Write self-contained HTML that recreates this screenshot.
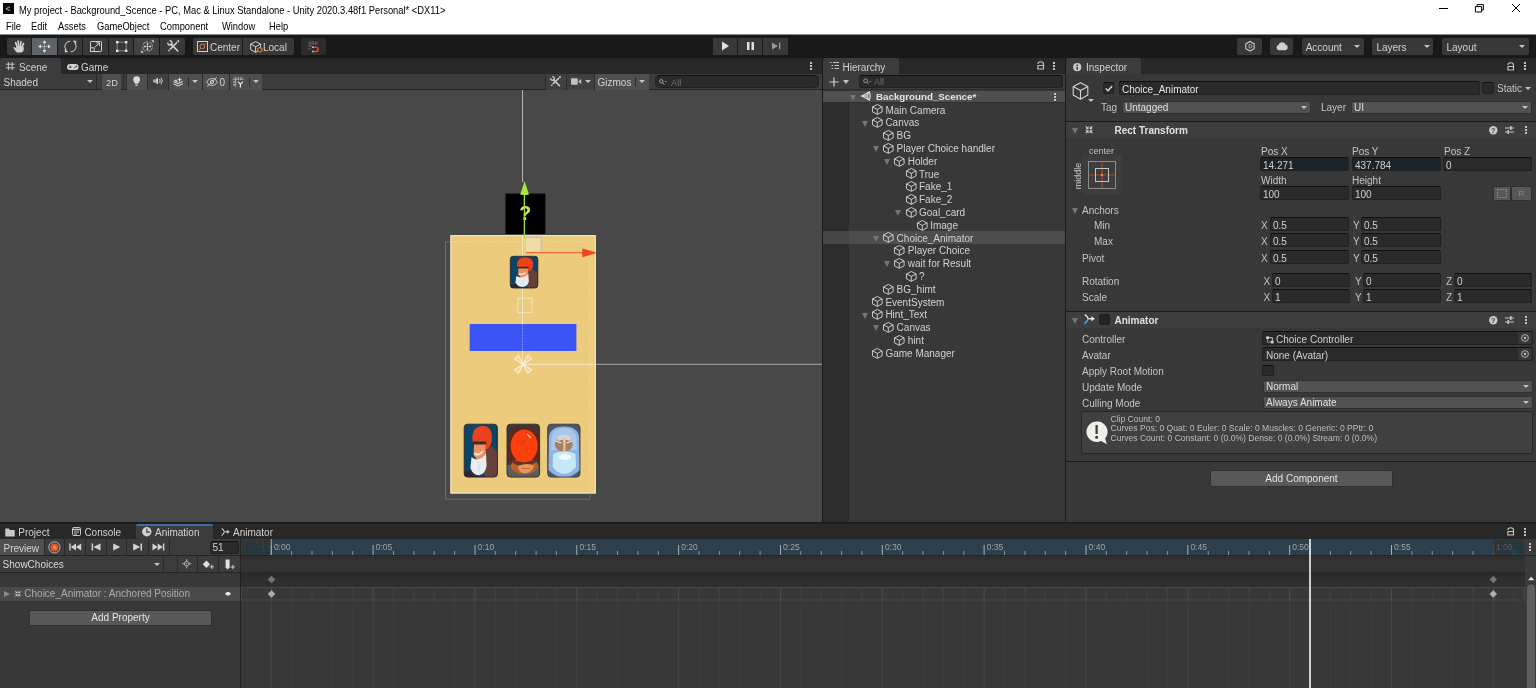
<!DOCTYPE html><html><head><meta charset="utf-8"><title>Unity</title><style>
*{box-sizing:border-box;margin:0;padding:0}
html,body{width:1536px;height:688px;overflow:hidden;background:#191919}
body{font-family:"Liberation Sans",sans-serif;font-size:10px;color:#c8c8c8;position:relative;line-height:1}
.a{position:absolute}
.t{position:absolute;white-space:nowrap;line-height:12px;height:12px}
.b{font-weight:bold}
.fld{position:absolute;height:14px;background:#2a2a2a;border:1px solid #212121;border-top-color:#0f0f0f;border-radius:2px;color:#d0d0d0;padding-left:2px;padding-top:2px;line-height:12px;white-space:nowrap}
.fldb{background:#1b242b}
.dd{position:absolute;height:13px;background:#515151;border:1px solid #303030;border-radius:2px;color:#e0e0e0;padding-left:2px;line-height:12px;white-space:nowrap}
.btn{position:absolute;background:#585858;border:1px solid #303030;border-radius:2px;color:#e4e4e4;text-align:center;white-space:nowrap}
.tb{position:absolute;background:#383838;top:38px;height:17px}
.stb{position:absolute;background:#4f4f4f;top:74px;height:15.5px}
.arr{position:absolute;width:0;height:0;border-left:3.5px solid transparent;border-right:3.5px solid transparent;border-top:4px solid #c4c4c4}
.fold{position:absolute;width:0;height:0;border-left:3.5px solid transparent;border-right:3.5px solid transparent;border-top:6px solid #757575}
.foldr{position:absolute;width:0;height:0;border-top:3.5px solid transparent;border-bottom:3.5px solid transparent;border-left:6px solid #757575}
svg{position:absolute;overflow:visible}
.lbl{color:#c4c4c4}
</style></head><body><div id="root" style="position:absolute;left:0;top:0;width:1536px;height:688px;overflow:hidden;will-change:transform;transform:translateZ(0)">
<div class="a" style="left:0;top:0;width:1536px;height:34px;background:#fff"></div><div class="a" style="left:0;top:34px;width:1536px;height:1px;background:#8a8a8a"></div>
<div class="a" style="left:2.5px;top:3px;width:11px;height:11px;background:#0a0a0a"></div>
<svg style="left:4.7px;top:6.4px" width="6" height="5.4" viewBox="0 0 7 7"><path d="M0.3 3.5 L3 1.2 L3 5.8 Z M3.8 0.6 L6.6 1.6 L4.2 3.2Z M3.8 6.4 L6.6 5.4 L4.2 3.8Z" fill="#b4b4b4"/></svg>
<div class="t" style="left:18.6px;top:4.5px;font-size:10.25px;transform:scaleX(0.912);transform-origin:0 0;color:#000">My project - Background_Scence - PC, Mac &amp; Linux Standalone - Unity 2020.3.48f1 Personal* &lt;DX11&gt;</div>
<div class="t" style="left:5.5px;top:21px;font-size:10.3px;transform:scaleX(0.905);transform-origin:0 0;color:#000">File</div>
<div class="t" style="left:31.3px;top:21px;font-size:10.3px;transform:scaleX(0.905);transform-origin:0 0;color:#000">Edit</div>
<div class="t" style="left:58.3px;top:21px;font-size:10.3px;transform:scaleX(0.905);transform-origin:0 0;color:#000">Assets</div>
<div class="t" style="left:96.5px;top:21px;font-size:10.3px;transform:scaleX(0.905);transform-origin:0 0;color:#000">GameObject</div>
<div class="t" style="left:160.3px;top:21px;font-size:10.3px;transform:scaleX(0.905);transform-origin:0 0;color:#000">Component</div>
<div class="t" style="left:222.3px;top:21px;font-size:10.3px;transform:scaleX(0.905);transform-origin:0 0;color:#000">Window</div>
<div class="t" style="left:269.3px;top:21px;font-size:10.3px;transform:scaleX(0.905);transform-origin:0 0;color:#000">Help</div>
<svg style="left:1438px;top:2px" width="90" height="14" viewBox="0 0 90 14"><path d="M1 6.5h9" stroke="#000" stroke-width="1" fill="none"/><path d="M37.4 4.6h6.2v5.4h-6.2z M39.2 4.6v-2h6.2v5.4h-1.8" stroke="#000" stroke-width="1" fill="none"/><path d="M74 2l8 8M82 2l-8 8" stroke="#000" stroke-width="1" fill="none"/></svg>
<div class="a" style="left:0;top:35px;width:1536px;height:23px;background:#191919"></div>
<div class="tb" style="left:7px;width:24px;background:#383838;border-radius:2px 0 0 2px;"></div>
<div class="tb" style="left:32px;width:25px;background:#5e6367;"></div>
<div class="tb" style="left:58px;width:24px;background:#383838;"></div>
<div class="tb" style="left:83px;width:25px;background:#383838;"></div>
<div class="tb" style="left:109px;width:24px;background:#383838;"></div>
<div class="tb" style="left:134px;width:25px;background:#424242;"></div>
<div class="tb" style="left:160px;width:25px;background:#383838;border-radius:0 2px 2px 0;"></div>
<div class="tb" style="left:193px;width:49px;border-radius:2px 0 0 2px"></div><div class="tb" style="left:243px;width:51px;border-radius:0 2px 2px 0"></div>
<div class="t" style="left:210px;top:42px;color:#d2d2d2">Center</div><div class="t" style="left:263px;top:42px;color:#d2d2d2">Local</div>
<div class="tb" style="left:301px;width:25px;border-radius:2px;background:#2c2c2c"></div>
<svg style="left:13.4px;top:39.8px" width="12" height="12.6" viewBox="0 0 12 12.6"><g fill="#d2d2d2"><rect x="-0.8" y="-3" width="1.7" height="6.4" rx="0.85" transform="translate(3.3,4.6) rotate(-20)"/><rect x="-0.85" y="-3.4" width="1.7" height="7" rx="0.85" transform="translate(5.4,3.7) rotate(-6)"/><rect x="-0.85" y="-3.3" width="1.7" height="6.8" rx="0.85" transform="translate(7.6,4) rotate(8)"/><rect x="-0.8" y="-2.8" width="1.6" height="6" rx="0.8" transform="translate(9.8,5.2) rotate(24)"/><path d="M0.4 7.4c0.5-0.7 1.3-0.5 1.8 0.1l1.1 1.3V6.6h7.2l0.3 1.6c0.2 2-0.8 4.2-2.4 4.2H4.8c-1 0-1.7-0.5-2.4-1.5z"/></g></svg>
<svg style="left:38.3px;top:39.8px" width="13" height="13" viewBox="-6.5 -6.5 13 13"><g stroke="#a8a8a8" stroke-width="0.9" fill="none"><path d="M0 -4V4M-4 0H4"/></g><g fill="#e4e4e4"><path d="M0 -6.3L-1.9 -3.5H1.9zM0 6.3L-1.9 3.5H1.9zM-6.3 0L-3.5 -1.9V1.9zM6.3 0L3.5 -1.9V1.9z"/></g></svg>
<svg style="left:63.8px;top:39.8px" width="13" height="13" viewBox="-6.5 -6.5 13 13"><g stroke="#d2d2d2" stroke-width="1" fill="none"><path d="M-0.2 -5.3A5.3 5.3 0 0 0 -4.4 3.4"/><path d="M0.2 5.3A5.3 5.3 0 0 0 4.4 -3.4"/></g><path d="M-5.7 2.2V5.7H-2.2zM5.7 -2.2V-5.7H2.2z" fill="#d2d2d2"/></svg>
<svg style="left:90px;top:41px" width="12" height="11" viewBox="0 0 12 11"><rect x="0.5" y="0.5" width="11" height="10" rx="0.8" fill="none" stroke="#d2d2d2" stroke-width="1"/><rect x="0.5" y="6.8" width="3.7" height="3.7" fill="none" stroke="#d2d2d2" stroke-width="1"/><path d="M5 6L9.3 1.9M6.2 1.9H9.4V5" stroke="#d2d2d2" stroke-width="1" fill="none"/></svg>
<svg style="left:115.8px;top:41px" width="11.4" height="11" viewBox="0 0 11.4 11"><path d="M1.2 1.2H10.2V9.8H1.2z" fill="none" stroke="#909090" stroke-width="0.9"/><g fill="#e6e6e6"><rect x="0" y="0" width="2.4" height="2.4"/><rect x="9" y="0" width="2.4" height="2.4"/><rect x="0" y="8.6" width="2.4" height="2.4"/><rect x="9" y="8.6" width="2.4" height="2.4"/></g></svg>
<svg style="left:140.8px;top:40px" width="13" height="13" viewBox="-6.5 -6.5 13 13"><g stroke="#bdbdbd" stroke-width="0.9" fill="none"><circle r="5" stroke="#9c9c9c" stroke-dasharray="6 1.85" transform="rotate(14)"/><path d="M0 -3.4V3.4M-3.4 0H3.4"/></g><g fill="#d8d8d8"><path d="M0 -4.2L-1.3 -2.2H1.3zM0 4.2L-1.3 2.2H1.3zM-4.2 0L-2.2 -1.3V1.3zM4.2 0L2.2 -1.3V1.3z"/><path d="M6.3 -6.3H3.6L6.3 -3.6zM-6.3 6.3H-3.6L-6.3 3.6z"/></g></svg>
<svg style="left:166.8px;top:40px" width="12.4" height="12.4" viewBox="0 0 12.4 12.4"><g stroke="#d2d2d2" fill="none"><path d="M4 4.2L10.8 11" stroke-width="1.7" stroke-linecap="round"/><path d="M10.2 2.2L3 9.4" stroke-width="1.6"/></g><path d="M2.54 0.83A2.1 2.1 0 1 1 0.83 2.54" fill="none" stroke="#d2d2d2" stroke-width="1.4"/><path d="M1 11.6L1.7 9.3L3.2 10.8z" fill="#d2d2d2"/><path d="M10 1l1.4 1.4l0.7-0.7a1 1 0 0 0 -1.4-1.4z" fill="#d2d2d2"/></svg>
<svg style="left:197px;top:41px" width="11" height="11" viewBox="0 0 11 11"><rect x="0.5" y="0.5" width="10" height="10" fill="none" stroke="#d0d0d0" stroke-width="1"/><path d="M2 9L9 2" stroke="#9a9a9a" stroke-width="0.7"/><circle cx="5.4" cy="5.4" r="2.4" fill="#383838" stroke="#e8722c" stroke-width="1"/></svg>
<svg style="left:249.6px;top:40.6px" width="13" height="12" viewBox="0 0 13 12"><path d="M5.6 0.6L10.6 3.1V8.6L5.6 11.3L0.6 8.6V3.1Z M0.6 3.1L5.6 5.8L10.6 3.1M5.6 5.8V11.3" fill="none" stroke="#d0d0d0" stroke-width="1" stroke-linejoin="round"/><circle cx="9.8" cy="8.8" r="2.2" fill="#383838" stroke="#e8722c" stroke-width="1.2"/></svg>
<svg style="left:308.4px;top:41.2px" width="11.2" height="11.2" viewBox="0 0 11.2 11.2"><path d="M2.2 0V7M5 0V4M7.8 0V4M0 2.2H10M0 5H4M0 7.8H3" stroke="#7a7a7a" stroke-width="0.9" stroke-dasharray="1.6 0.7" fill="none"/><path d="M4.6 6.2H8a2.2 2.2 0 0 1 0 4.4H4.6" fill="none" stroke="#d8482c" stroke-width="1.5"/><path d="M4.2 6.2h1.4M4.2 10.6h1.4" stroke="#d8d8d8" stroke-width="1.5"/></svg>
<div class="tb" style="left:713px;width:24px"></div>
<div class="tb" style="left:738px;width:24px"></div>
<div class="tb" style="left:763px;width:25px"></div>
<svg style="left:713px;top:38px" width="75" height="16" viewBox="0 0 75 16"><path d="M9 3.5l7 4.5l-7 4.5z" fill="#e0e0e0"/><path d="M34 4h2.5v8H34zM38.5 4H41v8h-2.5z" fill="#e0e0e0"/><path d="M59 4.5l6 3.5l-6 3.5z M66 4.5h1.3v7H66z" fill="#9a9a9a"/></svg>
<div class="tb" style="left:1237px;width:25px;border-radius:2px"></div>
<div class="tb" style="left:1270px;width:23px;border-radius:2px"></div>
<div class="tb" style="left:1302px;width:62px;border-radius:2px"></div>
<div class="tb" style="left:1372px;width:61px;border-radius:2px"></div>
<div class="tb" style="left:1442px;width:87px;border-radius:2px"></div>
<div class="t" style="left:1305.7px;top:42px;color:#d2d2d2">Account</div><div class="arr" style="left:1353.7px;top:45px;border-left-width:3.2px;border-right-width:3.2px;border-top-width:3.8px"></div>
<div class="t" style="left:1376.4px;top:42px;color:#d2d2d2">Layers</div><div class="arr" style="left:1424px;top:45px;border-left-width:3.2px;border-right-width:3.2px;border-top-width:3.8px"></div>
<div class="t" style="left:1446.5px;top:42px;color:#d2d2d2">Layout</div><div class="arr" style="left:1518.6px;top:45px;border-left-width:3.2px;border-right-width:3.2px;border-top-width:3.8px"></div>
<svg style="left:1244.5px;top:41.3px" width="10" height="10.6" viewBox="-5 -5.3 10 10.6"><path d="M0 -4.8L4.2 -2.4V2.4L0 4.8L-4.2 2.4V-2.4Z" fill="none" stroke="#c8c8c8" stroke-width="1.1"/><path d="M-0.9 -1.7h1.2a1.7 1.7 0 0 1 0 3.4h-1.2z" fill="none" stroke="#c8c8c8" stroke-width="0.8"/></svg>
<svg style="left:1275.6px;top:42.2px" width="12.4" height="8.4" viewBox="0 0 12.4 8.4"><path d="M3 8.2a2.7 2.7 0 0 1 -0.5 -5.3a3.6 3.6 0 0 1 6.9 -0.3a2.9 2.9 0 0 1 0.4 5.6z" fill="#d0d0d0"/></svg>
<div class="a" style="left:0;top:58px;width:822px;height:16px;background:#282828"></div>
<div class="a" style="left:0;top:58px;width:61px;height:16px;background:#3c3c3c;border-radius:3px 3px 0 0"></div>
<div class="t" style="left:19px;top:62px;color:#d2d2d2">Scene</div><div class="t" style="left:81px;top:62px;color:#d2d2d2">Game</div>
<div class="a" style="left:0;top:74px;width:822px;height:16px;background:#3c3c3c;border-bottom:1px solid #232323"></div>
<div class="t" style="left:3.5px;top:77px;color:#d2d2d2">Shaded</div><div class="arr" style="left:86.5px;top:80px;border-left-width:3px;border-right-width:3px;border-top-width:3.5px"></div>
<div class="a" style="left:96px;top:74px;width:1px;height:15px;background:#2c2c2c"></div>
<div class="a" style="left:123px;top:74px;width:1px;height:15px;background:#2c2c2c"></div>
<div class="a" style="left:126px;top:74px;width:1px;height:15px;background:#2c2c2c"></div>
<div class="a" style="left:147px;top:74px;width:1px;height:15px;background:#2c2c2c"></div>
<div class="a" style="left:168px;top:74px;width:1px;height:15px;background:#2c2c2c"></div>
<div class="a" style="left:201.5px;top:74px;width:1px;height:15px;background:#2c2c2c"></div>
<div class="a" style="left:229px;top:74px;width:1px;height:15px;background:#2c2c2c"></div>
<div class="a" style="left:545px;top:74px;width:1px;height:15px;background:#2c2c2c"></div>
<div class="a" style="left:566px;top:74px;width:1px;height:15px;background:#2c2c2c"></div>
<div class="a" style="left:594px;top:74px;width:1px;height:15px;background:#2c2c2c"></div>
<div class="stb" style="left:102px;width:19px;background:#4f4f4f"></div>
<div class="stb" style="left:127px;width:20px;background:#4f4f4f"></div>
<div class="stb" style="left:148px;width:20px;background:#404040"></div>
<div class="stb" style="left:169px;width:32.5px;background:#4f4f4f"></div>
<div class="stb" style="left:202.5px;width:26.5px;background:#4f4f4f"></div>
<div class="stb" style="left:230px;width:32px;background:#4f4f4f"></div>
<div class="stb" style="left:546px;width:20px;background:#404040"></div>
<div class="stb" style="left:567px;width:27px;background:#404040"></div>
<div class="stb" style="left:595px;width:54px;background:#4f4f4f"></div>
<div class="t" style="left:106px;top:77px;font-size:9.3px;color:#d2d2d2">2D</div>
<div class="arr" style="left:192px;top:80.2px;border-left-width:3px;border-right-width:3px;border-top-width:3.5px"></div><div class="a" style="left:188px;top:77px;width:1px;height:9px;background:#2e2e2e"></div>
<div class="t" style="left:219.6px;top:77px;color:#d2d2d2">0</div>
<div class="arr" style="left:253px;top:80.2px;border-left-width:3px;border-right-width:3px;border-top-width:3.5px"></div><div class="a" style="left:249px;top:77px;width:1px;height:9px;background:#2e2e2e"></div>
<div class="arr" style="left:585px;top:80.2px;border-left-width:3px;border-right-width:3px;border-top-width:3.5px"></div>
<div class="t" style="left:597.5px;top:77px;color:#d2d2d2">Gizmos</div><div class="a" style="left:635px;top:77px;width:1px;height:9px;background:#2e2e2e"></div><div class="arr" style="left:639px;top:80.2px;border-left-width:3px;border-right-width:3px;border-top-width:3.5px"></div>
<div class="fld" style="left:655px;top:75px;width:164px;height:13px;border-radius:5px;padding:0"></div><div class="t" style="left:671px;top:76.5px;color:#6e6e6e;font-size:9.3px">All</div>
<div class="a" style="left:810px;top:62px;width:2px;height:8px;background:repeating-linear-gradient(#c4c4c4 0 2px,transparent 2px 3px)"></div>
<svg style="left:5.6px;top:62.4px" width="8.6" height="8" viewBox="0 0 8.6 8"><path d="M2.4 0V8M6.2 0V8M0 2.2H8.6M0 5.8H8.6" stroke="#d2d2d2" stroke-width="0.9" fill="none"/></svg>
<svg style="left:67px;top:64px" width="11.6" height="6" viewBox="0 0 11.6 6"><rect x="0" y="0" width="11.6" height="6" rx="3" fill="#d2d2d2"/><path d="M2 3h2.4M3.2 1.8v2.4" stroke="#282828" stroke-width="0.8"/><circle cx="8" cy="3.6" r="0.7" fill="#282828"/><circle cx="9.4" cy="2.3" r="0.7" fill="#282828"/></svg>
<svg style="left:133px;top:76.2px" width="7.2" height="10" viewBox="0 0 7.2 10"><path d="M3.6 0.2a3.4 3.4 0 0 1 3.4 3.4c0 1.5-0.9 2.2-1.4 3.4H1.6C1.1 5.8 0.2 5.1 0.2 3.6A3.4 3.4 0 0 1 3.6 0.2z" fill="#dadada"/><path d="M2 7.8h3.2M2.5 9.3h2.2" stroke="#dadada" stroke-width="1"/></svg>
<svg style="left:152.6px;top:77px" width="10.6" height="8" viewBox="0 0 10.6 8"><path d="M0.3 2.6h1.5v2.8H0.3z M2.4 2.4L5 0.4V7.6L2.4 5.6z" fill="#d2d2d2"/><path d="M6.4 2a3 3 0 0 1 0 4M7.9 0.8a4.8 4.8 0 0 1 0 6.4" stroke="#d2d2d2" stroke-width="1" fill="none"/></svg>
<svg style="left:172.6px;top:76.6px" width="10.2" height="9.6" viewBox="0 0 10.2 9.6"><path d="M0.4 4.6L5 6.6L9.8 4.6M0.4 6.8L5 8.9L9.8 6.8" stroke="#d2d2d2" stroke-width="1.1" fill="none"/><path d="M0.8 3.6L3 2.4L5 4.4L3.6 5z" fill="#d2d2d2"/><path d="M6.6 0l0.7 1.9l1.9 0.7l-1.9 0.7L6.6 5.2L5.9 3.3L4 2.6l1.9-0.7z" fill="#e4e4e4"/></svg>
<svg style="left:206px;top:76.6px" width="12" height="10" viewBox="0 0 12 10"><path d="M0.5 5C2 2.6 4 1.6 6 1.6S10 2.6 11.5 5C10 7.4 8 8.4 6 8.4S2 7.4 0.5 5z" fill="none" stroke="#d2d2d2" stroke-width="0.9"/><circle cx="6" cy="5" r="1.7" fill="none" stroke="#d2d2d2" stroke-width="0.9"/><path d="M1.2 9.4L10.6 0.4" stroke="#d2d2d2" stroke-width="1"/></svg>
<svg style="left:232.8px;top:76.6px" width="11.2" height="10.4" viewBox="0 0 11.2 10.4"><path d="M2.3 0V10M5.2 0V3M8.1 0V3M0 2.2H10.6M0 5H3.4M0 7.8H3.4" stroke="#d2d2d2" stroke-width="0.9" fill="none" stroke-dasharray="1.7 0.6"/><path d="M5 4.6L7.4 7.2L9.9 4.6M7.4 7.2V10.4" stroke="#e8e8e8" stroke-width="1.2" fill="none"/></svg>
<svg style="left:550.2px;top:76px" width="11" height="11" viewBox="0 0 12.4 12.4"><g stroke="#d2d2d2" fill="none"><path d="M4 4.2L10.8 11" stroke-width="1.7" stroke-linecap="round"/><path d="M10.2 2.2L3 9.4" stroke-width="1.6"/></g><path d="M2.54 0.83A2.1 2.1 0 1 1 0.83 2.54" fill="none" stroke="#d2d2d2" stroke-width="1.4"/><path d="M1 11.6L1.7 9.3L3.2 10.8z" fill="#d2d2d2"/><path d="M10 1l1.4 1.4l0.7-0.7a1 1 0 0 0 -1.4-1.4z" fill="#d2d2d2"/></svg>
<svg style="left:571px;top:78.2px" width="10.2" height="7" viewBox="0 0 10.2 7"><rect x="0" y="0.2" width="6.8" height="6.6" rx="0.8" fill="#c0c0c0"/><path d="M7.2 3.5L10.2 0.8V6.2z" fill="#c0c0c0"/></svg>
<svg style="left:659px;top:79.2px" width="8" height="6" viewBox="0 0 8 6"><circle cx="2.3" cy="2.3" r="1.7" fill="none" stroke="#b0b0b0" stroke-width="0.9"/><path d="M3.5 3.6L5.4 5.6" stroke="#b0b0b0" stroke-width="1"/><path d="M5.6 2h2.2L6.7 3.3z" fill="#b0b0b0"/></svg>
<div class="a" style="left:0;top:90px;width:822px;height:432px;background:#484848"></div>
<svg style="left:0;top:90px" width="822" height="432" viewBox="0 90 822 432"><defs><filter id="bl" x="-20%" y="-20%" width="140%" height="140%"><feGaussianBlur stdDeviation="0.55"/></filter><filter id="bl2" x="-20%" y="-20%" width="140%" height="140%"><feGaussianBlur stdDeviation="1.4"/></filter><clipPath id="c0"><rect x="510.3" y="256.3" width="27.5" height="31.7" rx="3"/></clipPath><clipPath id="c1"><rect x="464.2" y="424.2" width="33.2" height="52.9" rx="3.5"/></clipPath><clipPath id="c2"><rect x="507" y="424.2" width="32.6" height="52.9" rx="3.5"/></clipPath><clipPath id="c3"><rect x="547.7" y="424.2" width="32.3" height="52.9" rx="3.5"/></clipPath></defs><path d="M522.5 90V182" stroke="#b4b4b4" stroke-width="1"/><rect x="505.5" y="193.6" width="39.9" height="40.4" fill="#000"/><text x="525.3" y="219.6" font-size="19.5" font-weight="bold" text-anchor="middle" fill="#e2dc50" font-family="Liberation Sans,sans-serif">?</text><rect x="450.4" y="235.2" width="145.4" height="258.3" fill="#eccb7c"/><rect x="450.9" y="235.7" width="144.4" height="257.3" fill="none" stroke="#f7ead0" stroke-width="1"/><path d="M450 241.8H445.5V499.2H590.2V493.5" fill="none" stroke="#6e6e6e" stroke-width="1"/><path d="M451 241.8H590M590 241.8V493" fill="none" stroke="#f8f0d8" stroke-width="1" stroke-dasharray="1 1.2" opacity="0.55"/><path d="M522.5 236V324" stroke="#f4e6c0" stroke-width="1"/><path d="M522.5 324V364" stroke="#ffffff" stroke-width="1" stroke-dasharray="1 1.2" opacity="0.9"/><path d="M524.4 194V238" stroke="#a0e040" stroke-width="1.3"/><path d="M524.6 181L520.2 194.4Q524.6 195.8 529 194.4Z" fill="#a6e63e"/><rect x="526" y="237.3" width="15" height="14.2" fill="#f2d9a8"/><path d="M526 237.3H541.2V251.5" fill="none" stroke="#a9c4e4" stroke-width="1.2"/><path d="M526 252.6H584" stroke="#f06a3a" stroke-width="1.2"/><path d="M597 252.8L582.6 248.4Q581.4 252.8 582.6 257.3Z" fill="#e84a1c"/><g clip-path="url(#c0)"><g transform="translate(510.3,256.3) scale(0.828,0.6) translate(-464.2,-424.2)"><rect x="464" y="424" width="34" height="54" fill="#0a4568"/><g filter="url(#bl)"><path d="M486 444 L491 446 L498 452 L498 478 L484 478 L486 460Z" fill="#68403a"/><path d="M472.6 441 C471 430 477 425.5 483 426 C490 426 493 432 491.6 441 C491 446 488 449.5 485.5 449 L484 443 L473 443Z" fill="#e9421a"/><path d="M472.4 441.5 H486 L486.4 444.5 H473Z" fill="#4a2a22"/><path d="M474 444.5 H485.5 L486 456 L478 461 L473.6 455Z" fill="#f0905e"/><path d="M474.5 452.5 Q478.5 455 482.5 450.5 L482.8 452.8 Q478.5 457 474.5 454.5Z" fill="#f8f0e8"/><path d="M471.5 457 Q474 459 477 459.5 Q482 459 486 454 L486.6 466 Q485 474.5 479 475.2 Q472.5 475 470.4 468Z" fill="#ececf0"/><path d="M478 462 L481 463 L480 473 L477.5 473Z" fill="#cfe6f4"/><path d="M464 472 L471 470 L474 476 L486 476.5 L486 478 L464 478Z" fill="#33262a"/></g></g></g><rect x="510.3" y="256.3" width="27.5" height="31.7" rx="3" fill="none" stroke="#1c1c28" stroke-width="0.8"/><rect x="518" y="298.1" width="14" height="14.6" fill="none" stroke="#f6e8c4" stroke-width="0.9"/><rect x="469.7" y="324" width="106.7" height="27" fill="#3a54f6"/><path d="M522.5 324V351" stroke="#9fb0ff" stroke-width="1" stroke-dasharray="1 1.2"/><path d="M524 364.3H596" stroke="#f7ecd0" stroke-width="1"/><path d="M596 364.3H822" stroke="#a6a6a6" stroke-width="1"/><g transform="translate(523.1,364.3)" fill="#f0d69a" stroke="#ffffff" stroke-width="0.8" stroke-linejoin="round"><path d="M0 0L-8.6 -5.4L-4.6 -9.2Z"/><path d="M0 0L8.6 -5.4L4.6 -9.2Z"/><path d="M0 0L-8.6 5.4L-4.6 9.2Z"/><path d="M0 0L8.6 5.4L4.6 9.2Z"/></g><g clip-path="url(#c1)"><rect x="464" y="424" width="34" height="54" fill="#0a4568"/><g filter="url(#bl)"><path d="M486 444 L491 446 L498 452 L498 478 L484 478 L486 460Z" fill="#68403a"/><path d="M472.6 441 C471 430 477 425.5 483 426 C490 426 493 432 491.6 441 C491 446 488 449.5 485.5 449 L484 443 L473 443Z" fill="#e9421a"/><path d="M472.4 441.5 H486 L486.4 444.5 H473Z" fill="#4a2a22"/><path d="M474 444.5 H485.5 L486 456 L478 461 L473.6 455Z" fill="#f0905e"/><path d="M474.5 452.5 Q478.5 455 482.5 450.5 L482.8 452.8 Q478.5 457 474.5 454.5Z" fill="#f8f0e8"/><path d="M471.5 457 Q474 459 477 459.5 Q482 459 486 454 L486.6 466 Q485 474.5 479 475.2 Q472.5 475 470.4 468Z" fill="#ececf0"/><path d="M478 462 L481 463 L480 473 L477.5 473Z" fill="#cfe6f4"/><path d="M464 472 L471 470 L474 476 L486 476.5 L486 478 L464 478Z" fill="#33262a"/></g></g><rect x="464.2" y="424.2" width="33.2" height="52.9" rx="3.5" fill="none" stroke="#2c2230" stroke-width="0.9"/><g clip-path="url(#c2)"><rect x="506" y="424" width="35" height="54" fill="#3c3838"/><g filter="url(#bl)"><path d="M512 427 H535 L540 440 V462 H507 V440Z" fill="#5a2c22"/><rect x="506" y="465" width="35" height="13" fill="#5c5c5c"/><ellipse cx="524.4" cy="466" rx="13.6" ry="8" fill="#b85f2c"/><ellipse cx="524.2" cy="446" rx="13.5" ry="16.6" fill="#f9400c"/><path d="M512 459 Q524 466 537 458 L536.5 462 Q524 470 512.5 463Z" fill="#6a3020"/><path d="M518 466 Q528 462 534 466 Q532 473 524 473.6 Q518 472 518 466Z" fill="#e3975c"/><path d="M522 468.5 h8" stroke="#b85f2c" stroke-width="0.8"/><path d="M527.4 433.4 L531.4 437.6 L530.2 438.2 L527 434.6Z" fill="#ffd8c0"/><path d="M520.5 446 L525.5 440" stroke="#c83408" stroke-width="0.8"/></g></g><rect x="507" y="424.2" width="32.6" height="52.9" rx="3.5" fill="none" stroke="#33282a" stroke-width="0.9"/><g clip-path="url(#c3)"><rect x="547" y="424" width="34" height="54" fill="#4c5668"/><g filter="url(#bl)"><path d="M549 436 Q551 426.5 564 426.5 Q577 426.5 579 436 L580 470 Q572 477.5 564 477.5 Q556 477.5 548.4 470Z" fill="#8fb4e2"/><path d="M552 434 Q556 428 564 428 Q573 428 576 435 L577 450 H551Z" fill="#a9c9ea"/><ellipse cx="563.8" cy="444.6" rx="9" ry="7.2" fill="#a9805e"/><path d="M557 437 Q564 432.5 571 437 L570 441 Q564 438 558 441Z" fill="#cfd6e2"/><path d="M563 437 L565.6 437 L565.4 451 L563.4 451Z" fill="#e8c49c"/><path d="M555.5 441 L561.5 443 M572 441 L566.6 443" stroke="#e8eef6" stroke-width="1.2"/><path d="M553 454 Q564 448.5 575.5 454 L576 467 Q570 474 564 474 Q558 474 552.6 467Z" fill="#c4e8f8"/><ellipse cx="565" cy="457" rx="6.4" ry="3" fill="#eefaff"/></g></g><rect x="547.7" y="424.2" width="32.3" height="52.9" rx="3.5" fill="none" stroke="#3c3c4c" stroke-width="0.9"/></svg>
<div class="a" style="left:823px;top:58px;width:242px;height:16px;background:#282828"></div>
<div class="a" style="left:823px;top:58px;width:76px;height:16px;background:#3c3c3c;border-radius:3px 3px 0 0"></div>
<div class="t" style="left:842.5px;top:62px;color:#d2d2d2">Hierarchy</div>
<div class="a" style="left:823px;top:74px;width:242px;height:16px;background:#3c3c3c;border-bottom:1px solid #2c2c2c"></div>
<div class="a" style="left:823px;top:90px;width:242px;height:432px;background:#383838"></div>
<div class="a" style="left:823px;top:90px;width:26px;height:432px;background:#2d2d2d"></div>
<div class="arr" style="left:843px;top:80px"></div>
<div class="fld" style="left:859px;top:75px;width:204px;height:13px;border-radius:3px"></div><div class="t" style="left:874px;top:76px;color:#6e6e6e;font-size:9px">All</div>
<div class="a" style="left:823px;top:91px;width:242px;height:11px;background:#4f4f4f"></div><div class="a" style="left:823px;top:102px;width:242px;height:1px;background:#303030"></div>
<div class="a" style="left:1054px;top:92.9px;width:2px;height:8px;background:repeating-linear-gradient(#c4c4c4 0 2px,transparent 2px 3px)"></div>
<div class="fold" style="left:850.3px;top:94.9px"></div>
<svg style="left:860.8px;top:91.4px" width="10" height="10" viewBox="0 0 10 10"><path d="M0.6 5L8.4 0.7L9.4 5L8.4 9.3Z" fill="rgba(255,255,255,0.25)" stroke="#f0f0f0" stroke-width="0.9" stroke-linejoin="round"/><path d="M0.6 5H5.6L8.4 0.7M5.6 5L8.4 9.3" fill="none" stroke="#f0f0f0" stroke-width="1"/></svg>
<div class="t b" style="left:876.0px;top:91px;color:#e4e4e4;font-size:9.75px">Background_Scence*</div>
<svg style="left:872.0px;top:104.3px" width="10.6" height="10.8" viewBox="0 0 10.6 10.8"><path d="M5.3 0.5 L10.1 2.9 L10.1 7.9 L5.3 10.3 L0.5 7.9 L0.5 2.9 Z M0.5 2.9 L5.3 5.4 L10.1 2.9 M5.3 5.4 V10.3" fill="none" stroke="#d0d0d0" stroke-width="0.95" stroke-linejoin="round"/></svg>
<div class="t" style="left:885.4px;top:104.5px;color:#d2d2d2">Main Camera</div>
<div class="fold" style="left:861.5px;top:120.5px"></div>
<svg style="left:872.0px;top:117.1px" width="10.6" height="10.8" viewBox="0 0 10.6 10.8"><path d="M5.3 0.5 L10.1 2.9 L10.1 7.9 L5.3 10.3 L0.5 7.9 L0.5 2.9 Z M0.5 2.9 L5.3 5.4 L10.1 2.9 M5.3 5.4 V10.3" fill="none" stroke="#d0d0d0" stroke-width="0.95" stroke-linejoin="round"/></svg>
<div class="t" style="left:885.4px;top:117.3px;color:#d2d2d2">Canvas</div>
<svg style="left:883.2px;top:129.9px" width="10.6" height="10.8" viewBox="0 0 10.6 10.8"><path d="M5.3 0.5 L10.1 2.9 L10.1 7.9 L5.3 10.3 L0.5 7.9 L0.5 2.9 Z M0.5 2.9 L5.3 5.4 L10.1 2.9 M5.3 5.4 V10.3" fill="none" stroke="#d0d0d0" stroke-width="0.95" stroke-linejoin="round"/></svg>
<div class="t" style="left:896.6px;top:130.1px;color:#d2d2d2">BG</div>
<div class="fold" style="left:872.7px;top:146.1px"></div>
<svg style="left:883.2px;top:142.7px" width="10.6" height="10.8" viewBox="0 0 10.6 10.8"><path d="M5.3 0.5 L10.1 2.9 L10.1 7.9 L5.3 10.3 L0.5 7.9 L0.5 2.9 Z M0.5 2.9 L5.3 5.4 L10.1 2.9 M5.3 5.4 V10.3" fill="none" stroke="#d0d0d0" stroke-width="0.95" stroke-linejoin="round"/></svg>
<div class="t" style="left:896.6px;top:142.9px;color:#d2d2d2">Player Choice handler</div>
<div class="fold" style="left:883.9px;top:158.9px"></div>
<svg style="left:894.4px;top:155.5px" width="10.6" height="10.8" viewBox="0 0 10.6 10.8"><path d="M5.3 0.5 L10.1 2.9 L10.1 7.9 L5.3 10.3 L0.5 7.9 L0.5 2.9 Z M0.5 2.9 L5.3 5.4 L10.1 2.9 M5.3 5.4 V10.3" fill="none" stroke="#d0d0d0" stroke-width="0.95" stroke-linejoin="round"/></svg>
<div class="t" style="left:907.8px;top:155.7px;color:#d2d2d2">Holder</div>
<svg style="left:905.6px;top:168.3px" width="10.6" height="10.8" viewBox="0 0 10.6 10.8"><path d="M5.3 0.5 L10.1 2.9 L10.1 7.9 L5.3 10.3 L0.5 7.9 L0.5 2.9 Z M0.5 2.9 L5.3 5.4 L10.1 2.9 M5.3 5.4 V10.3" fill="none" stroke="#d0d0d0" stroke-width="0.95" stroke-linejoin="round"/></svg>
<div class="t" style="left:919.0px;top:168.5px;color:#d2d2d2">True</div>
<svg style="left:905.6px;top:181.1px" width="10.6" height="10.8" viewBox="0 0 10.6 10.8"><path d="M5.3 0.5 L10.1 2.9 L10.1 7.9 L5.3 10.3 L0.5 7.9 L0.5 2.9 Z M0.5 2.9 L5.3 5.4 L10.1 2.9 M5.3 5.4 V10.3" fill="none" stroke="#d0d0d0" stroke-width="0.95" stroke-linejoin="round"/></svg>
<div class="t" style="left:919.0px;top:181.3px;color:#d2d2d2">Fake_1</div>
<svg style="left:905.6px;top:193.9px" width="10.6" height="10.8" viewBox="0 0 10.6 10.8"><path d="M5.3 0.5 L10.1 2.9 L10.1 7.9 L5.3 10.3 L0.5 7.9 L0.5 2.9 Z M0.5 2.9 L5.3 5.4 L10.1 2.9 M5.3 5.4 V10.3" fill="none" stroke="#d0d0d0" stroke-width="0.95" stroke-linejoin="round"/></svg>
<div class="t" style="left:919.0px;top:194.1px;color:#d2d2d2">Fake_2</div>
<div class="fold" style="left:895.1px;top:210.1px"></div>
<svg style="left:905.6px;top:206.7px" width="10.6" height="10.8" viewBox="0 0 10.6 10.8"><path d="M5.3 0.5 L10.1 2.9 L10.1 7.9 L5.3 10.3 L0.5 7.9 L0.5 2.9 Z M0.5 2.9 L5.3 5.4 L10.1 2.9 M5.3 5.4 V10.3" fill="none" stroke="#d0d0d0" stroke-width="0.95" stroke-linejoin="round"/></svg>
<div class="t" style="left:919.0px;top:206.9px;color:#d2d2d2">Goal_card</div>
<svg style="left:916.8px;top:219.5px" width="10.6" height="10.8" viewBox="0 0 10.6 10.8"><path d="M5.3 0.5 L10.1 2.9 L10.1 7.9 L5.3 10.3 L0.5 7.9 L0.5 2.9 Z M0.5 2.9 L5.3 5.4 L10.1 2.9 M5.3 5.4 V10.3" fill="none" stroke="#d0d0d0" stroke-width="0.95" stroke-linejoin="round"/></svg>
<div class="t" style="left:930.2px;top:219.7px;color:#d2d2d2">Image</div>
<div class="a" style="left:823px;top:231.2px;width:242px;height:12.8px;background:#4d4d4d"></div>
<div class="a" style="left:823px;top:231.2px;width:26px;height:12.8px;background:#474747"></div>
<div class="fold" style="left:872.7px;top:235.7px"></div>
<svg style="left:883.2px;top:232.3px" width="10.6" height="10.8" viewBox="0 0 10.6 10.8"><path d="M5.3 0.5 L10.1 2.9 L10.1 7.9 L5.3 10.3 L0.5 7.9 L0.5 2.9 Z M0.5 2.9 L5.3 5.4 L10.1 2.9 M5.3 5.4 V10.3" fill="none" stroke="#d0d0d0" stroke-width="0.95" stroke-linejoin="round"/></svg>
<div class="t" style="left:896.6px;top:232.5px;color:#d2d2d2">Choice_Animator</div>
<svg style="left:894.4px;top:245.1px" width="10.6" height="10.8" viewBox="0 0 10.6 10.8"><path d="M5.3 0.5 L10.1 2.9 L10.1 7.9 L5.3 10.3 L0.5 7.9 L0.5 2.9 Z M0.5 2.9 L5.3 5.4 L10.1 2.9 M5.3 5.4 V10.3" fill="none" stroke="#d0d0d0" stroke-width="0.95" stroke-linejoin="round"/></svg>
<div class="t" style="left:907.8px;top:245.3px;color:#d2d2d2">Player Choice</div>
<div class="fold" style="left:883.9px;top:261.3px"></div>
<svg style="left:894.4px;top:257.9px" width="10.6" height="10.8" viewBox="0 0 10.6 10.8"><path d="M5.3 0.5 L10.1 2.9 L10.1 7.9 L5.3 10.3 L0.5 7.9 L0.5 2.9 Z M0.5 2.9 L5.3 5.4 L10.1 2.9 M5.3 5.4 V10.3" fill="none" stroke="#d0d0d0" stroke-width="0.95" stroke-linejoin="round"/></svg>
<div class="t" style="left:907.8px;top:258.1px;color:#d2d2d2">wait for Result</div>
<svg style="left:905.6px;top:270.7px" width="10.6" height="10.8" viewBox="0 0 10.6 10.8"><path d="M5.3 0.5 L10.1 2.9 L10.1 7.9 L5.3 10.3 L0.5 7.9 L0.5 2.9 Z M0.5 2.9 L5.3 5.4 L10.1 2.9 M5.3 5.4 V10.3" fill="none" stroke="#d0d0d0" stroke-width="0.95" stroke-linejoin="round"/></svg>
<div class="t" style="left:919.0px;top:270.9px;color:#d2d2d2">?</div>
<svg style="left:883.2px;top:283.5px" width="10.6" height="10.8" viewBox="0 0 10.6 10.8"><path d="M5.3 0.5 L10.1 2.9 L10.1 7.9 L5.3 10.3 L0.5 7.9 L0.5 2.9 Z M0.5 2.9 L5.3 5.4 L10.1 2.9 M5.3 5.4 V10.3" fill="none" stroke="#d0d0d0" stroke-width="0.95" stroke-linejoin="round"/></svg>
<div class="t" style="left:896.6px;top:283.7px;color:#d2d2d2">BG_himt</div>
<svg style="left:872.0px;top:296.3px" width="10.6" height="10.8" viewBox="0 0 10.6 10.8"><path d="M5.3 0.5 L10.1 2.9 L10.1 7.9 L5.3 10.3 L0.5 7.9 L0.5 2.9 Z M0.5 2.9 L5.3 5.4 L10.1 2.9 M5.3 5.4 V10.3" fill="none" stroke="#d0d0d0" stroke-width="0.95" stroke-linejoin="round"/></svg>
<div class="t" style="left:885.4px;top:296.5px;color:#d2d2d2">EventSystem</div>
<div class="fold" style="left:861.5px;top:312.5px"></div>
<svg style="left:872.0px;top:309.1px" width="10.6" height="10.8" viewBox="0 0 10.6 10.8"><path d="M5.3 0.5 L10.1 2.9 L10.1 7.9 L5.3 10.3 L0.5 7.9 L0.5 2.9 Z M0.5 2.9 L5.3 5.4 L10.1 2.9 M5.3 5.4 V10.3" fill="none" stroke="#d0d0d0" stroke-width="0.95" stroke-linejoin="round"/></svg>
<div class="t" style="left:885.4px;top:309.3px;color:#d2d2d2">Hint_Text</div>
<div class="fold" style="left:872.7px;top:325.3px"></div>
<svg style="left:883.2px;top:321.9px" width="10.6" height="10.8" viewBox="0 0 10.6 10.8"><path d="M5.3 0.5 L10.1 2.9 L10.1 7.9 L5.3 10.3 L0.5 7.9 L0.5 2.9 Z M0.5 2.9 L5.3 5.4 L10.1 2.9 M5.3 5.4 V10.3" fill="none" stroke="#d0d0d0" stroke-width="0.95" stroke-linejoin="round"/></svg>
<div class="t" style="left:896.6px;top:322.1px;color:#d2d2d2">Canvas</div>
<svg style="left:894.4px;top:334.7px" width="10.6" height="10.8" viewBox="0 0 10.6 10.8"><path d="M5.3 0.5 L10.1 2.9 L10.1 7.9 L5.3 10.3 L0.5 7.9 L0.5 2.9 Z M0.5 2.9 L5.3 5.4 L10.1 2.9 M5.3 5.4 V10.3" fill="none" stroke="#d0d0d0" stroke-width="0.95" stroke-linejoin="round"/></svg>
<div class="t" style="left:907.8px;top:334.9px;color:#d2d2d2">hint</div>
<svg style="left:872.0px;top:347.5px" width="10.6" height="10.8" viewBox="0 0 10.6 10.8"><path d="M5.3 0.5 L10.1 2.9 L10.1 7.9 L5.3 10.3 L0.5 7.9 L0.5 2.9 Z M0.5 2.9 L5.3 5.4 L10.1 2.9 M5.3 5.4 V10.3" fill="none" stroke="#d0d0d0" stroke-width="0.95" stroke-linejoin="round"/></svg>
<div class="t" style="left:885.4px;top:347.7px;color:#d2d2d2">Game Manager</div>
<svg style="left:830px;top:62px" width="9" height="8" viewBox="0 0 9 8"><path d="M0 0.5h1.5M3 0.5h6M1.5 3.5h1.5M4.5 3.5h4.5M1.5 6.5h1.5M4.5 6.5h4.5" stroke="#c4c4c4" stroke-width="1" fill="none"/></svg>
<svg style="left:828.5px;top:76.5px" width="10" height="10" viewBox="0 0 11 11"><path d="M5.5 0.5v10M0.5 5.5h10" stroke="#d8d8d8" stroke-width="1.3" fill="none"/></svg>
<svg style="left:863px;top:78px" width="9" height="8" viewBox="0 0 9 8"><circle cx="2.6" cy="2.8" r="1.9" fill="none" stroke="#9a9a9a" stroke-width="1"/><path d="M4 4.3L5.6 6.2" stroke="#9a9a9a" stroke-width="1"/><path d="M6 3.2h2.4l-1.2 1.4z" fill="#9a9a9a"/></svg>
<svg style="left:1037.0px;top:61.3px" width="7.4" height="8.6" viewBox="0 0 7.4 8.6"><path d="M0.9 2.9C0.9 0 6.5 0 6.5 2.9V8H0.9V4.5H6.5" fill="none" stroke="#c4c4c4" stroke-width="1.15" stroke-linejoin="round"/></svg>
<div class="a" style="left:1053px;top:62px;width:2px;height:8px;background:repeating-linear-gradient(#c4c4c4 0 2px,transparent 2px 3px)"></div>
<div class="a" style="left:1066px;top:58px;width:470px;height:16px;background:#282828"></div>
<div class="a" style="left:1066px;top:58px;width:75px;height:16px;background:#3c3c3c;border-radius:3px 3px 0 0"></div>
<div class="t" style="left:1086px;top:62px;color:#d2d2d2">Inspector</div>
<div class="a" style="left:1066px;top:74px;width:470px;height:448px;background:#383838"></div>
<svg style="left:1073.3px;top:62.5px" width="8.4" height="8.4" viewBox="0 0 9 9"><circle cx="4.5" cy="4.5" r="4.4" fill="#c8c8c8"/><path d="M4.5 1.7v1.5M4.5 4v3.3" stroke="#2e2e2e" stroke-width="1.5"/></svg>
<svg style="left:1507.0px;top:62.3px" width="7.4" height="8.6" viewBox="0 0 7.4 8.6"><path d="M0.9 2.9C0.9 0 6.5 0 6.5 2.9V8H0.9V4.5H6.5" fill="none" stroke="#c4c4c4" stroke-width="1.15" stroke-linejoin="round"/></svg>
<div class="a" style="left:1524px;top:62px;width:2px;height:8px;background:repeating-linear-gradient(#c4c4c4 0 2px,transparent 2px 3px)"></div>
<svg style="left:1072px;top:81.5px" width="17" height="18" viewBox="0 0 17 18"><path d="M8.5 0.8 L15.8 4.6 L15.8 13 L8.5 17.2 L1.2 13 L1.2 4.6 Z M1.2 4.6 L8.5 8.6 L15.8 4.6 M8.5 8.6 L8.5 17.2" fill="none" stroke="#d4d4d4" stroke-width="1.1" stroke-linejoin="round"/></svg>
<div class="arr" style="left:1087.5px;top:98.5px;border-left-width:3px;border-right-width:3px;border-top-width:3.5px"></div>
<div class="fld" style="left:1103px;top:82px;width:11px;height:12px;padding:0"></div>
<svg style="left:1105px;top:84.5px" width="8" height="7" viewBox="0 0 8 7"><path d="M0.8 3.5L3 5.8L7.2 1" stroke="#e0e0e0" stroke-width="1.3" fill="none"/></svg>
<div class="fld " style="left:1119px;top:81px;width:361px;padding-left:2px;color:#e4e4e4">Choice_Animator</div>
<div class="fld" style="left:1482px;top:82px;width:12px;height:12px;padding:0"></div>
<div class="t lbl" style="left:1497px;top:83px;">Static</div>
<div class="arr" style="left:1525px;top:86.5px;border-left-width:3px;border-right-width:3px;border-top-width:3.5px"></div>
<div class="t lbl" style="left:1101px;top:102px;">Tag</div>
<div class="dd" style="left:1122px;top:101px;width:189px">Untagged</div><div class="arr" style="left:1301px;top:106px;border-left-width:3px;border-right-width:3px;border-top-width:3.5px"></div>
<div class="t lbl" style="left:1321px;top:102px;">Layer</div>
<div class="dd" style="left:1351px;top:101px;width:181px">UI</div><div class="arr" style="left:1522px;top:106px;border-left-width:3px;border-right-width:3px;border-top-width:3.5px"></div>
<div class="a" style="left:1066px;top:121px;width:470px;height:17px;background:#3e3e3e;border-top:1px solid #1a1a1a"></div>
<div class="fold" style="left:1071.5px;top:127.5px"></div>
<div class="t b" style="left:1114.5px;top:125px;color:#e0e0e0">Rect Transform</div>
<svg style="left:1489.3px;top:125.7px" width="8.6" height="8.6" viewBox="0 0 9 9"><circle cx="4.5" cy="4.5" r="4.4" fill="#c8c8c8"/><text x="4.5" y="7.4" font-size="7.5" font-weight="bold" text-anchor="middle" fill="#3e3e3e" font-family="Liberation Sans,sans-serif">?</text></svg>
<svg style="left:1505px;top:126px" width="9" height="8" viewBox="0 0 9 8"><path d="M0 2h9M0 6h9" stroke="#c8c8c8" stroke-width="1"/><path d="M5.8 0v4M3.2 4v4" stroke="#c8c8c8" stroke-width="1.5"/></svg>
<div class="a" style="left:1524.5px;top:126px;width:2px;height:8px;background:repeating-linear-gradient(#c4c4c4 0 2px,transparent 2px 3px)"></div>
<svg style="left:1083.8px;top:125px" width="10.2" height="9.6" viewBox="0 0 10 10"><path d="M1.5 1.5L3.6 3.6M8.5 1.5L6.4 3.6M1.5 8.5L3.6 6.4M8.5 8.5L6.4 6.4" stroke="#d4d4d4" stroke-width="1.1"/><path d="M4.4 4.4h-3.2L4.4 1.2zM5.6 4.4h3.2L5.6 1.2zM4.4 5.6h-3.2L4.4 8.8zM5.6 5.6h3.2L5.6 8.8z" fill="#d4d4d4"/></svg>
<div class="t lbl" style="left:1089px;top:145px;font-size:9px">center</div>
<div class="t lbl" style="left:1062.5px;top:170px;font-size:9px;transform:rotate(-90deg);transform-origin:center;width:30px;text-align:center">middle</div>
<div class="a" style="left:1082px;top:155px;width:40px;height:40px;background:#3d3d3d;border-radius:3px"></div>
<svg style="left:1088px;top:161px" width="28" height="28" viewBox="0 0 28 28"><rect x="0.5" y="0.5" width="27" height="27" fill="none" stroke="#8c8c8c" stroke-width="1"/><path d="M14 1v26M1 14h26" stroke="#a8452f" stroke-width="1.2"/><rect x="7.5" y="7.5" width="13" height="13" fill="none" stroke="#c4c4c4" stroke-width="1"/><circle cx="14" cy="14" r="1.3" fill="#ff7a30"/></svg>
<div class="t lbl" style="left:1261px;top:146px;">Pos X</div>
<div class="t lbl" style="left:1352px;top:146px;">Pos Y</div>
<div class="t lbl" style="left:1444px;top:146px;">Pos Z</div>
<div class="fld fldb" style="left:1260px;top:157px;width:89px;padding-left:2px;">14.271</div>
<div class="fld fldb" style="left:1352px;top:157px;width:89px;padding-left:2px;">437.784</div>
<div class="fld " style="left:1443px;top:157px;width:89px;padding-left:2px;">0</div>
<div class="t lbl" style="left:1261px;top:175px;">Width</div>
<div class="t lbl" style="left:1352px;top:175px;">Height</div>
<div class="fld " style="left:1260px;top:186px;width:89px;padding-left:2px;">100</div>
<div class="fld " style="left:1352px;top:186px;width:89px;padding-left:2px;">100</div>
<div class="btn" style="left:1493px;top:186px;width:18px;height:15px;border-radius:2px 0 0 2px;background:#585858"></div><div class="btn" style="left:1511px;top:186px;width:21px;height:15px;border-radius:0 2px 2px 0;background:#585858;color:#8a8a8a;font-size:8px;line-height:13px">R</div>
<svg style="left:1497px;top:189px" width="10" height="9" viewBox="0 0 10 9"><rect x="0.5" y="0.5" width="9" height="8" fill="none" stroke="#8a8a8a" stroke-width="1" stroke-dasharray="1.5 1"/></svg>
<div class="fold" style="left:1071.5px;top:207.5px"></div>
<div class="t lbl" style="left:1082px;top:205px;">Anchors</div>
<div class="t lbl" style="left:1094px;top:220px;">Min</div>
<div class="t lbl" style="left:1261px;top:220px;">X</div>
<div class="fld " style="left:1270px;top:217px;width:79px;padding-left:2px;">0.5</div>
<div class="t lbl" style="left:1353px;top:220px;">Y</div>
<div class="fld " style="left:1361px;top:217px;width:80px;padding-left:2px;">0.5</div>
<div class="t lbl" style="left:1094px;top:236px;">Max</div>
<div class="t lbl" style="left:1261px;top:236px;">X</div>
<div class="fld " style="left:1270px;top:233px;width:79px;padding-left:2px;">0.5</div>
<div class="t lbl" style="left:1353px;top:236px;">Y</div>
<div class="fld " style="left:1361px;top:233px;width:80px;padding-left:2px;">0.5</div>
<div class="t lbl" style="left:1082px;top:253px;">Pivot</div>
<div class="t lbl" style="left:1261px;top:253px;">X</div>
<div class="fld " style="left:1270px;top:250px;width:79px;padding-left:2px;">0.5</div>
<div class="t lbl" style="left:1353px;top:253px;">Y</div>
<div class="fld " style="left:1361px;top:250px;width:80px;padding-left:2px;">0.5</div>
<div class="t lbl" style="left:1082px;top:276px;">Rotation</div>
<div class="t lbl" style="left:1263.5px;top:276px;">X</div>
<div class="fld " style="left:1272px;top:273px;width:78px;padding-left:2px;">0</div>
<div class="t lbl" style="left:1355px;top:276px;">Y</div>
<div class="fld " style="left:1363px;top:273px;width:78px;padding-left:2px;">0</div>
<div class="t lbl" style="left:1446px;top:276px;">Z</div>
<div class="fld " style="left:1454px;top:273px;width:78px;padding-left:2px;">0</div>
<div class="t lbl" style="left:1082px;top:292px;">Scale</div>
<div class="t lbl" style="left:1263.5px;top:292px;">X</div>
<div class="fld " style="left:1272px;top:289px;width:78px;padding-left:2px;">1</div>
<div class="t lbl" style="left:1355px;top:292px;">Y</div>
<div class="fld " style="left:1363px;top:289px;width:78px;padding-left:2px;">1</div>
<div class="t lbl" style="left:1446px;top:292px;">Z</div>
<div class="fld " style="left:1454px;top:289px;width:78px;padding-left:2px;">1</div>
<div class="a" style="left:1066px;top:311px;width:470px;height:17px;background:#3e3e3e;border-top:1px solid #1a1a1a"></div>
<div class="fold" style="left:1071.5px;top:317.5px"></div>
<div class="t b" style="left:1114.5px;top:315px;color:#e0e0e0">Animator</div>
<svg style="left:1489.3px;top:315.7px" width="8.6" height="8.6" viewBox="0 0 9 9"><circle cx="4.5" cy="4.5" r="4.4" fill="#c8c8c8"/><text x="4.5" y="7.4" font-size="7.5" font-weight="bold" text-anchor="middle" fill="#3e3e3e" font-family="Liberation Sans,sans-serif">?</text></svg>
<svg style="left:1505px;top:316px" width="9" height="8" viewBox="0 0 9 8"><path d="M0 2h9M0 6h9" stroke="#c8c8c8" stroke-width="1"/><path d="M5.8 0v4M3.2 4v4" stroke="#c8c8c8" stroke-width="1.5"/></svg>
<div class="a" style="left:1524.5px;top:316px;width:2px;height:8px;background:repeating-linear-gradient(#c4c4c4 0 2px,transparent 2px 3px)"></div>
<svg style="left:1083.5px;top:314px" width="11" height="10" viewBox="0 0 11 10"><path d="M0.8 0.6C2.5 1.5 3.6 3 4.2 4.8" stroke="#e6e6e6" stroke-width="1.3" fill="none"/><path d="M4 4.8h4" stroke="#e6e6e6" stroke-width="1.3"/><path d="M7.2 2.3L11 4.8L7.2 7.3z" fill="#e6e6e6"/><path d="M0.6 9.6C2 8.5 3.2 7 4 5.2" stroke="#5ab0f0" stroke-width="1.4" fill="none"/></svg>
<div class="a" style="left:1098.5px;top:314px;width:11px;height:11px;background:#1b262e;border:1px solid #1d1d1d;border-radius:2px"></div>
<div class="t lbl" style="left:1082px;top:334px;">Controller</div>
<div class="fld " style="left:1262px;top:331px;width:271px;padding-left:13px;">Choice Controller</div>
<div class="a" style="left:1518px;top:332px;width:14px;height:12px;background:#373737;border-radius:0 2px 2px 0"></div>
<svg style="left:1521px;top:334px" width="8" height="8" viewBox="0 0 8 8"><circle cx="4" cy="4" r="3.4" fill="none" stroke="#c4c4c4" stroke-width="0.9"/><circle cx="4" cy="4" r="1.2" fill="#c4c4c4"/></svg>
<svg style="left:1265.7px;top:336px" width="8" height="8" viewBox="0 0 8 8"><rect x="0.2" y="0.4" width="2.8" height="2.6" fill="#d8d8d8"/><rect x="4.8" y="4.8" width="2.8" height="2.6" fill="#d8d8d8"/><path d="M1.6 3v3.2h3.2" stroke="#6aa0d8" stroke-width="0.9" fill="none"/><path d="M3 1.7h3.4v3" stroke="#d8d8d8" stroke-width="0.9" fill="none"/></svg>
<div class="t lbl" style="left:1082px;top:350px;">Avatar</div>
<div class="fld " style="left:1262px;top:347px;width:271px;padding-left:3px;">None (Avatar)</div>
<div class="a" style="left:1518px;top:348px;width:14px;height:12px;background:#373737;border-radius:0 2px 2px 0"></div>
<svg style="left:1521px;top:350px" width="8" height="8" viewBox="0 0 8 8"><circle cx="4" cy="4" r="3.4" fill="none" stroke="#c4c4c4" stroke-width="0.9"/><circle cx="4" cy="4" r="1.2" fill="#c4c4c4"/></svg>
<div class="t lbl" style="left:1082px;top:366px;">Apply Root Motion</div>
<div class="fld" style="left:1262px;top:365px;width:12px;height:11px;padding:0"></div>
<div class="t lbl" style="left:1082px;top:382px;">Update Mode</div>
<div class="dd" style="left:1263px;top:380px;width:270px">Normal</div><div class="arr" style="left:1523px;top:385px;border-left-width:3px;border-right-width:3px;border-top-width:3.5px"></div>
<div class="t lbl" style="left:1082px;top:398px;">Culling Mode</div>
<div class="dd" style="left:1263px;top:396px;width:270px">Always Animate</div><div class="arr" style="left:1523px;top:401px;border-left-width:3px;border-right-width:3px;border-top-width:3.5px"></div>
<div class="a" style="left:1081px;top:411px;width:452px;height:43px;background:#404040;border:1px solid #262626;border-radius:2px"></div>
<svg style="left:1085.5px;top:421px" width="22" height="24" viewBox="0 0 22 24"><path d="M10.6 0.5a10.3 10.3 0 1 0 4.6 19.6l5.6 3.2l-1.6-6A10.3 10.3 0 0 0 10.6 0.5z" fill="#f0f0e8"/><path d="M10.6 4v9" stroke="#383838" stroke-width="2.2"/><circle cx="10.6" cy="16.2" r="1.5" fill="#383838"/></svg>
<div class="t" style="left:1110.5px;top:413px;font-size:8.55px;color:#bdbdbd">Clip Count: 0</div>
<div class="t" style="left:1110.5px;top:422px;font-size:8.55px;color:#bdbdbd">Curves Pos: 0 Quat: 0 Euler: 0 Scale: 0 Muscles: 0 Generic: 0 PPtr: 0</div>
<div class="t" style="left:1110.5px;top:432px;font-size:8.55px;color:#bdbdbd">Curves Count: 0 Constant: 0 (0.0%) Dense: 0 (0.0%) Stream: 0 (0.0%)</div>
<div class="a" style="left:1066px;top:461px;width:470px;height:1px;background:#1a1a1a"></div>
<div class="btn" style="left:1210px;top:470px;width:183px;height:17px;line-height:15px;background:#585858">Add Component</div>
<div class="a" style="left:0;top:539px;width:1536px;height:149px;background:#383838"></div>
<div class="a" style="left:0;top:522px;width:1536px;height:1px;background:#191919"></div><div class="a" style="left:0;top:523px;width:1536px;height:1px;background:#202020"></div>
<div class="a" style="left:0;top:524px;width:1536px;height:15px;background:#282828"></div>
<div class="a" style="left:136px;top:524px;width:77px;height:15px;background:#3c3c3c;border-top:2px solid #3a6ea5;border-radius:2px 2px 0 0"></div>
<div class="t" style="left:18.3px;top:527px;color:#d2d2d2">Project</div>
<div class="t" style="left:84.4px;top:527px;color:#d2d2d2">Console</div>
<div class="t" style="left:155px;top:527px;color:#d2d2d2">Animation</div>
<div class="t" style="left:233px;top:527px;color:#d2d2d2">Animator</div>
<svg style="left:5px;top:527.5px" width="10" height="9" viewBox="0 0 10 9"><path d="M0.3 0.6h3.6l1 1.4h4.8v6.4H0.3z" fill="#c8c8c8"/></svg>
<svg style="left:71.7px;top:527px" width="9" height="9" viewBox="0 0 9 9"><rect x="0.5" y="0.5" width="8" height="8" rx="1" fill="none" stroke="#c8c8c8" stroke-width="1"/><path d="M1 2.5h7" stroke="#c8c8c8" stroke-width="1.6"/><path d="M2 5h5M2 7h3" stroke="#c8c8c8" stroke-width="1"/></svg>
<svg style="left:141.6px;top:527.3px" width="9.6" height="9.6" viewBox="0 0 10 10"><circle cx="5" cy="5" r="4.9" fill="#d0d0d0"/><path d="M5 1.5V5.4H8.3" stroke="#3c3c3c" stroke-width="1.2" fill="none"/></svg>
<svg style="left:221px;top:528px" width="9" height="8" viewBox="0 0 11 10"><path d="M0.8 0.6C2.5 1.5 3.6 3 4.2 4.8" stroke="#d0d0d0" stroke-width="1.3" fill="none"/><path d="M4 4.8h4" stroke="#d0d0d0" stroke-width="1.3"/><path d="M7.2 2.3L11 4.8L7.2 7.3z" fill="#d0d0d0"/><path d="M0.6 9.6C2 8.5 3.2 7 4 5.2" stroke="#d0d0d0" stroke-width="1.3" fill="none"/></svg>
<svg style="left:1507.0px;top:527.3px" width="7.4" height="8.6" viewBox="0 0 7.4 8.6"><path d="M0.9 2.9C0.9 0 6.5 0 6.5 2.9V8H0.9V4.5H6.5" fill="none" stroke="#c4c4c4" stroke-width="1.15" stroke-linejoin="round"/></svg>
<div class="a" style="left:1524px;top:527.5px;width:2px;height:8px;background:repeating-linear-gradient(#c4c4c4 0 2px,transparent 2px 3px)"></div>
<div class="a" style="left:0;top:539px;width:240px;height:16px;background:#3c3c3c"></div>
<div class="a" style="left:0;top:555px;width:240px;height:1px;background:#232323"></div>
<div class="a" style="left:0;top:556px;width:240px;height:16px;background:#3c3c3c"></div>
<div class="a" style="left:0;top:572px;width:240px;height:1px;background:#232323"></div>
<div class="a" style="left:0;top:539px;width:44px;height:16px;background:#505050"></div>
<div class="t" style="left:3.5px;top:543px;color:#d2d2d2">Preview</div>
<div class="a" style="left:44px;top:539px;width:1px;height:16px;background:#2a2a2a"></div>
<div class="a" style="left:64px;top:539px;width:1px;height:16px;background:#2a2a2a"></div>
<div class="a" style="left:85px;top:539px;width:1px;height:16px;background:#2a2a2a"></div>
<div class="a" style="left:106px;top:539px;width:1px;height:16px;background:#2a2a2a"></div>
<div class="a" style="left:126px;top:539px;width:1px;height:16px;background:#2a2a2a"></div>
<div class="a" style="left:148px;top:539px;width:1px;height:16px;background:#2a2a2a"></div>
<div class="a" style="left:169px;top:539px;width:1px;height:16px;background:#2a2a2a"></div>
<svg style="left:48px;top:541px" width="13" height="13" viewBox="0 0 13 13"><circle cx="6.4" cy="6.4" r="5.6" fill="none" stroke="#c4c4c4" stroke-width="0.9"/><circle cx="6.4" cy="6.4" r="4" fill="#e4572e"/><circle cx="6.8" cy="6.4" r="1.8" fill="#ff8a3c"/></svg>
<svg style="left:66px;top:543px" width="104" height="8" viewBox="0 0 104 8"><g fill="#d4d4d4"><path d="M3.3 0.5h1.4v7H3.3zM10 0.5v7L4.9 4zM15.2 0.5v7L10 4z"/><path d="M25.6 0.5h1.5v7h-1.5zM34.5 0.5v7L27.5 4z"/><path d="M47.2 0.5v7L54.4 4z"/><path d="M67.2 0.5v7L74.2 4zM74.5 0.5H76v7h-1.5z"/><path d="M86.5 0.5v7L91.7 4zM91.7 0.5v7L96.8 4zM96.9 0.5h1.4v7h-1.4z"/></g></svg>
<div class="fld" style="left:209.5px;top:540.5px;width:29px;height:13px;padding-top:0;line-height:12px;border-radius:3px">51</div>
<div class="t" style="left:2.6px;top:559px;color:#d8d8d8">ShowChoices</div><div class="arr" style="left:153.5px;top:562.5px;border-left-width:3px;border-right-width:3px;border-top-width:3.5px"></div>
<div class="a" style="left:163px;top:556px;width:1px;height:16px;background:#2a2a2a"></div>
<div class="a" style="left:177px;top:556px;width:1px;height:16px;background:#2a2a2a"></div>
<div class="a" style="left:197px;top:556px;width:1px;height:16px;background:#2a2a2a"></div>
<div class="a" style="left:218px;top:556px;width:1px;height:16px;background:#2a2a2a"></div>
<svg style="left:181.9px;top:559.1px" width="9.4" height="9.4" viewBox="0 0 11 11"><circle cx="5.5" cy="5.5" r="2.7" fill="none" stroke="#d4d4d4" stroke-width="0.9"/><path d="M5.5 0v3M5.5 8v3M0 5.5h3M8 5.5h3" stroke="#d4d4d4" stroke-width="0.9"/><circle cx="5.5" cy="5.5" r="0.7" fill="#d4d4d4"/></svg>
<svg style="left:202px;top:560px" width="13" height="10" viewBox="0 0 13 10"><path d="M4.4 0.6L8 4.3L4.4 8L0.8 4.3z" fill="#e0e0e0"/><path d="M9.8 4.6v4.4M7.6 6.8H12" stroke="#d4d4d4" stroke-width="0.9"/></svg>
<svg style="left:225px;top:559px" width="11" height="11" viewBox="0 0 11 11"><path d="M0.6 0.6h4v7.6l-2 2.4l-2-2.4z" fill="#e0e0e0"/><path d="M7.8 5.8v4.4M5.6 8H10" stroke="#d4d4d4" stroke-width="0.9"/></svg>
<div class="a" style="left:0;top:587px;width:240px;height:14px;background:#4a4a4a"></div>
<div class="foldr" style="left:4.2px;top:591px;border-left-color:#8a8a8a"></div>
<svg style="left:14px;top:589.6px" width="7.8" height="7.6" viewBox="0 0 10 10"><path d="M1.5 1.5L3.6 3.6M8.5 1.5L6.4 3.6M1.5 8.5L3.6 6.4M8.5 8.5L6.4 6.4" stroke="#d4d4d4" stroke-width="1.1"/><path d="M4.4 4.4h-3.2L4.4 1.2zM5.6 4.4h3.2L5.6 1.2zM4.4 5.6h-3.2L4.4 8.8zM5.6 5.6h3.2L5.6 8.8z" fill="#d4d4d4"/></svg>
<div class="t" style="left:24.3px;top:588px;color:#adadad">Choice_Animator : Anchored Position</div>
<svg style="left:224.8px;top:592.3px" width="6" height="3.5" viewBox="0 0 7 4"><path d="M0 2L2.2 0.1h2.6L7 2L4.8 3.9H2.2z" fill="#e8e8e8"/></svg>
<div class="btn" style="left:29px;top:610px;width:183px;height:16px;line-height:14px;background:#585858">Add Property</div>
<div class="a" style="left:240px;top:539px;width:1px;height:149px;background:#232323"></div>
<div class="a" style="left:241px;top:539px;width:1284px;height:16px;background:#373737"></div>
<div class="a" style="left:243px;top:541px;width:1281px;height:13px;background-image:radial-gradient(circle at 0.6px 0.6px,#1b3442 0.55px,transparent 0.85px),radial-gradient(circle at 0.6px 0.6px,#235a78 0.5px,transparent 0.8px);background-size:2.1px 2.1px,6.3px 4.2px;background-position:0 0,1px 1px"></div>
<div class="a" style="left:271.3px;top:539px;width:1222.0px;height:16px;background:#2b3f4c"></div>
<div class="a" style="left:1525px;top:539px;width:11px;height:16px;background:#3c3c3c"></div>
<div class="a" style="left:1528.5px;top:543px;width:2px;height:8px;background:repeating-linear-gradient(#c4c4c4 0 2px,transparent 2px 3px)"></div>
<div class="a" style="left:241px;top:555px;width:1295px;height:1px;background:#232323"></div>
<div class="a" style="left:241px;top:556px;width:1284px;height:16px;background:linear-gradient(#2e2e2e,#333 40%)"></div>
<div class="a" style="left:241px;top:572px;width:1284px;height:15px;background:linear-gradient(#2a2a2a,#2f2f2f 50%);border-top:1px solid #282828"></div>
<div class="a" style="left:1525px;top:556px;width:11px;height:132px;background:#3a3a3a"></div>
<svg style="left:0;top:539px" width="1536" height="149" viewBox="0 0 1536 149"><path d="M291.7 61.5V149 M312.0 61.5V149 M332.4 61.5V149 M352.8 61.5V149 M393.5 61.5V149 M413.9 61.5V149 M434.2 61.5V149 M454.6 61.5V149 M495.3 61.5V149 M515.7 61.5V149 M536.1 61.5V149 M556.4 61.5V149 M597.2 61.5V149 M617.5 61.5V149 M637.9 61.5V149 M658.3 61.5V149 M699.0 61.5V149 M719.4 61.5V149 M739.7 61.5V149 M760.1 61.5V149 M800.8 61.5V149 M821.2 61.5V149 M841.6 61.5V149 M861.9 61.5V149 M902.7 61.5V149 M923.0 61.5V149 M943.4 61.5V149 M963.8 61.5V149 M1004.5 61.5V149 M1024.9 61.5V149 M1045.2 61.5V149 M1065.6 61.5V149 M1106.3 61.5V149 M1126.7 61.5V149 M1147.1 61.5V149 M1167.4 61.5V149 M1208.2 61.5V149 M1228.5 61.5V149 M1248.9 61.5V149 M1269.3 61.5V149 M1310.0 61.5V149 M1330.4 61.5V149 M1350.8 61.5V149 M1371.1 61.5V149 M1411.9 61.5V149 M1432.2 61.5V149 M1452.6 61.5V149 M1473.0 61.5V149 M1513.7 61.5V149" stroke="#3e3e3e" stroke-width="1"/><path d="M271.3 61.5V149 M373.1 61.5V149 M475.0 61.5V149 M576.8 61.5V149 M678.6 61.5V149 M780.5 61.5V149 M882.3 61.5V149 M984.1 61.5V149 M1086.0 61.5V149 M1187.8 61.5V149 M1289.7 61.5V149 M1391.5 61.5V149 M1493.3 61.5V149" stroke="#454545" stroke-width="1"/><path d="M271.3 6V16 M373.1 6V16 M475.0 6V16 M576.8 6V16 M678.6 6V16 M780.5 6V16 M882.3 6V16 M984.1 6V16 M1086.0 6V16 M1187.8 6V16 M1289.7 6V16 M1391.5 6V16" stroke="#b0b0b0" stroke-width="1"/><path d="M291.7 12V16 M312.0 12V16 M332.4 12V16 M352.8 12V16 M393.5 12V16 M413.9 12V16 M434.2 12V16 M454.6 12V16 M495.3 12V16 M515.7 12V16 M536.1 12V16 M556.4 12V16 M597.2 12V16 M617.5 12V16 M637.9 12V16 M658.3 12V16 M699.0 12V16 M719.4 12V16 M739.7 12V16 M760.1 12V16 M800.8 12V16 M821.2 12V16 M841.6 12V16 M861.9 12V16 M902.7 12V16 M923.0 12V16 M943.4 12V16 M963.8 12V16 M1004.5 12V16 M1024.9 12V16 M1045.2 12V16 M1065.6 12V16 M1106.3 12V16 M1126.7 12V16 M1147.1 12V16 M1167.4 12V16 M1208.2 12V16 M1228.5 12V16 M1248.9 12V16 M1269.3 12V16 M1310.0 12V16 M1330.4 12V16 M1350.8 12V16 M1371.1 12V16 M1411.9 12V16 M1432.2 12V16 M1452.6 12V16 M1473.0 12V16" stroke="#8e9498" stroke-width="1"/><path d="M271.3 0V16" stroke="#a8a8a8" stroke-width="1"/><path d="M1493.3 6V16 M1513.7 11V16" stroke="#4a5258" stroke-width="1"/><text x="273.9" y="11.4" font-size="8.5" fill="#a4a4a4" font-family="Liberation Sans,sans-serif">0:00</text><text x="375.7" y="11.4" font-size="8.5" fill="#a4a4a4" font-family="Liberation Sans,sans-serif">0:05</text><text x="477.6" y="11.4" font-size="8.5" fill="#a4a4a4" font-family="Liberation Sans,sans-serif">0:10</text><text x="579.4" y="11.4" font-size="8.5" fill="#a4a4a4" font-family="Liberation Sans,sans-serif">0:15</text><text x="681.2" y="11.4" font-size="8.5" fill="#a4a4a4" font-family="Liberation Sans,sans-serif">0:20</text><text x="783.1" y="11.4" font-size="8.5" fill="#a4a4a4" font-family="Liberation Sans,sans-serif">0:25</text><text x="884.9" y="11.4" font-size="8.5" fill="#a4a4a4" font-family="Liberation Sans,sans-serif">0:30</text><text x="986.7" y="11.4" font-size="8.5" fill="#a4a4a4" font-family="Liberation Sans,sans-serif">0:35</text><text x="1088.6" y="11.4" font-size="8.5" fill="#a4a4a4" font-family="Liberation Sans,sans-serif">0:40</text><text x="1190.4" y="11.4" font-size="8.5" fill="#a4a4a4" font-family="Liberation Sans,sans-serif">0:45</text><text x="1292.2" y="11.4" font-size="8.5" fill="#a4a4a4" font-family="Liberation Sans,sans-serif">0:50</text><text x="1394.1" y="11.4" font-size="8.5" fill="#a4a4a4" font-family="Liberation Sans,sans-serif">0:55</text><text x="1495.9" y="11.4" font-size="8.5" fill="#5a5a5a" font-family="Liberation Sans,sans-serif">1:00</text><rect x="241.5" y="48.5" width="1283" height="12.5" fill="#383838" stroke="#474747" stroke-width="1"/><path d="M291.7 49V61 M312.0 49V61 M332.4 49V61 M352.8 49V61 M393.5 49V61 M413.9 49V61 M434.2 49V61 M454.6 49V61 M495.3 49V61 M515.7 49V61 M536.1 49V61 M556.4 49V61 M597.2 49V61 M617.5 49V61 M637.9 49V61 M658.3 49V61 M699.0 49V61 M719.4 49V61 M739.7 49V61 M760.1 49V61 M800.8 49V61 M821.2 49V61 M841.6 49V61 M861.9 49V61 M902.7 49V61 M923.0 49V61 M943.4 49V61 M963.8 49V61 M1004.5 49V61 M1024.9 49V61 M1045.2 49V61 M1065.6 49V61 M1106.3 49V61 M1126.7 49V61 M1147.1 49V61 M1167.4 49V61 M1208.2 49V61 M1228.5 49V61 M1248.9 49V61 M1269.3 49V61 M1310.0 49V61 M1330.4 49V61 M1350.8 49V61 M1371.1 49V61 M1411.9 49V61 M1432.2 49V61 M1452.6 49V61 M1473.0 49V61 M1513.7 49V61" stroke="#424242" stroke-width="1"/><path d="M271.3 49V61 M373.1 49V61 M475.0 49V61 M576.8 49V61 M678.6 49V61 M780.5 49V61 M882.3 49V61 M984.1 49V61 M1086.0 49V61 M1187.8 49V61 M1289.7 49V61 M1391.5 49V61 M1493.3 49V61" stroke="#4c4c4c" stroke-width="1"/><path d="M271.5 36.7L275.3 40.5L271.5 44.3L267.7 40.5z" fill="#747474"/><path d="M1493.3 36.7L1497.1 40.5L1493.3 44.3L1489.5 40.5z" fill="#747474"/><path d="M271.5 51.2L275.3 55L271.5 58.8L267.7 55z" fill="#adadad"/><path d="M1493.3 51.2L1497.1 55L1493.3 58.8L1489.5 55z" fill="#adadad"/><path d="M1310.0 0V149" stroke="#ececec" stroke-width="1.7"/><path d="M1528 41.3h6.4l-3.2-3.6z" fill="#e0e0e0"/><rect x="1527" y="45.5" width="8" height="120" rx="4" fill="#5f5f5f"/></svg>
</div></body></html>
